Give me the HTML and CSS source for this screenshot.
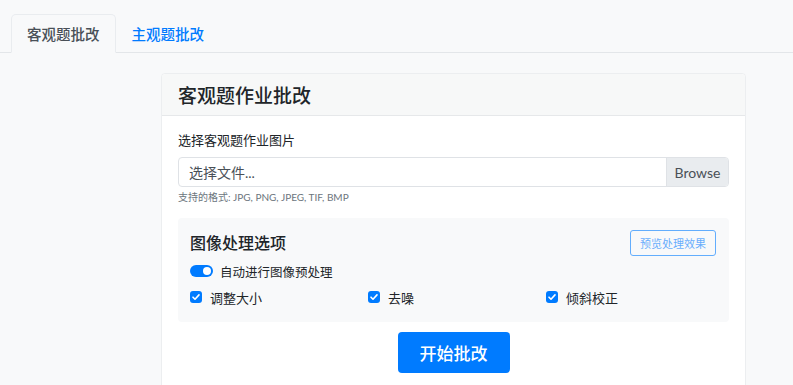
FILE: index.html
```html
<!DOCTYPE html>
<html lang="zh-CN">
<head>
  <meta charset="UTF-8">
  <meta name="viewport" content="width=device-width, initial-scale=1.0">
  <title>作业批改</title>
  <link rel="stylesheet" href="styles.css">
</head>
<body>

<ul class="tabs">
  <li class="tab active">客观题批改</li>
  <li class="tab">主观题批改</li>
</ul>

<div class="card">
  <div class="card-header">客观题作业批改</div>
  <div class="card-body">
    <label class="field-label">选择客观题作业图片</label>
    <div class="file-input">
      <span class="file-name">选择文件...</span>
      <span class="browse">Browse</span>
    </div>
    <div class="help">支持的格式: JPG, PNG, JPEG, TIF, BMP</div>

    <div class="options">
      <div class="options-head">
        <h5 class="options-title">图像处理选项</h5>
        <button class="btn-outline" disabled>预览处理效果</button>
      </div>
      <div class="switch-row">
        <span class="switch"><span class="knob"></span></span>
        <span class="switch-label">自动进行图像预处理</span>
      </div>
      <div class="checks">
        <div class="check"><span class="box"><svg viewBox="0 0 12 12"><path d="M3 6.2l2 2 4-4.3" /></svg></span>调整大小</div>
        <div class="check"><span class="box"><svg viewBox="0 0 12 12"><path d="M3 6.2l2 2 4-4.3" /></svg></span>去噪</div>
        <div class="check"><span class="box"><svg viewBox="0 0 12 12"><path d="M3 6.2l2 2 4-4.3" /></svg></span>倾斜校正</div>
      </div>
    </div>

    <div class="actions">
      <button class="btn-primary">开始批改</button>
    </div>
  </div>
</div>

</body>
</html>
```

FILE: styles.css
```css
body {
  margin: 0;
  background-color: #f8f9fa;
  font-family: Lato, "Noto Sans CJK SC", sans-serif;
  color: #212529;
  overflow: hidden;
}
.tabs {
  list-style: none;
  margin: 0;
  padding: 14px 0 0 11px;
  display: flex;
  border-bottom: 1px solid #e3e6e9;
}
.tab {
  height: 37px;
  padding: 0 15px;
  display: flex;
  align-items: center;
  white-space: nowrap;
  font-size: 14.5px;
  font-weight: 500;
  color: #007bff;
  border: 1px solid transparent;
  border-radius: 5px 5px 0 0;
  margin-bottom: -1px;
}
.tab.active {
  color: #495057;
  background-color: #f8f9fa;
  border-color: #e9ecef #e9ecef #f8f9fa;
}
.card {
  margin: 20px 0 0 161px;
  width: 583px;
  background-color: #fff;
  border: 1px solid #eceef0;
  border-radius: 4px;
}
.card-header {
  height: 41px;
  padding-left: 16px;
  display: flex;
  align-items: center;
  font-size: 19px;
  font-weight: 500;
  background-color: #f7f8f8;
  border-bottom: 1px solid #e6e8ea;
  border-radius: 4px 4px 0 0;
}
.card-body {
  padding: 15px 16px 40px;
}
.field-label {
  display: block;
  font-size: 13px;
  line-height: 18px;
  margin-bottom: 8px;
}
.file-input {
  display: flex;
  height: 28px;
  border: 1px solid #dfe2e6;
  border-radius: 4px;
  overflow: hidden;
}
.file-name {
  flex: 1;
  display: flex;
  align-items: center;
  padding-left: 10px;
  font-size: 14px;
  color: #495057;
}
.browse {
  width: 61px;
  display: flex;
  align-items: center;
  justify-content: center;
  font-size: 14px;
  color: #495057;
  background-color: #e9ecef;
  border-left: 1px solid #dfe2e6;
}
.help {
  font-size: 10px;
  color: #6c757d;
  margin-top: 3px;
  line-height: 14px;
}
.options {
  margin-top: 14px;
  background-color: #f8f9fa;
  border-radius: 4px;
  padding: 12px 12px 14px;
}
.options-head {
  display: flex;
  justify-content: space-between;
  align-items: center;
}
.options-title {
  margin: 0;
  font-size: 16px;
  font-weight: 500;
  line-height: 26px;
}
.btn-outline {
  margin-right: 1px;
  font-family: inherit;
  font-size: 11px;
  color: #007bff;
  background: transparent;
  border: 1px solid #007bff;
  border-radius: 3px;
  height: 26px;
  width: 86px;
  padding: 0;
  opacity: 0.6;
}
.switch-row {
  display: flex;
  align-items: center;
  margin-top: 4px;
  height: 22px;
}
.switch {
  width: 23px;
  height: 12px;
  border-radius: 6px;
  background-color: #007bff;
  position: relative;
  margin-right: 7px;
}
.knob {
  position: absolute;
  right: 2px;
  top: 2px;
  width: 8px;
  height: 8px;
  border-radius: 50%;
  background-color: #fff;
}
.switch-label {
  font-size: 12.5px;
}
.checks {
  display: grid;
  grid-template-columns: 178px 178px 1fr;
  margin-top: 4px;
  height: 22px;
  align-items: center;
}
.check {
  display: flex;
  align-items: center;
  font-size: 13px;
}
.box {
  width: 12px;
  height: 12px;
  border-radius: 3px;
  background-color: #007bff;
  margin-right: 8px;
  display: flex;
}
.box svg {
  width: 12px;
  height: 12px;
  fill: none;
  stroke: #fff;
  stroke-width: 1.6;
  stroke-linecap: round;
  stroke-linejoin: round;
}
.actions {
  display: flex;
  justify-content: center;
  margin-top: 10px;
}
.btn-primary {
  width: 112px;
  height: 41px;
  font-family: inherit;
  font-size: 17px;
  font-weight: 500;
  color: #fff;
  background-color: #007bff;
  border: none;
  border-radius: 4px;
}
```
